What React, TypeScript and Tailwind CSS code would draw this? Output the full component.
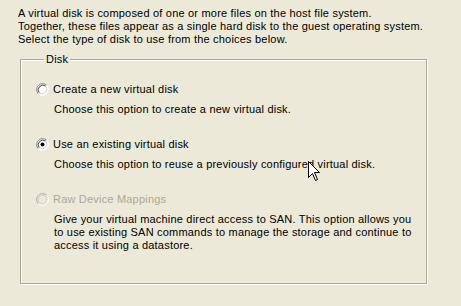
import React from 'react';

type Option = {
  label: string;
  desc: string[];
  checked?: boolean;
  disabled?: boolean;
};

const options: Option[] = [
  { label: 'Create a new virtual disk', desc: ['Choose this option to create a new virtual disk.'] },
  { label: 'Use an existing virtual disk', desc: ['Choose this option to reuse a previously configured virtual disk.'], checked: true },
  {
    label: 'Raw Device Mappings',
    desc: [
      'Give your virtual machine direct access to SAN. This option allows you',
      'to use existing SAN commands to manage the storage and continue to',
      'access it using a datastore.',
    ],
    disabled: true,
  },
];

function Radio({ checked, disabled }: { checked?: boolean; disabled?: boolean }) {
  return (
    <svg width="13" height="13" viewBox="0 0 13 13" className="shrink-0">
      <circle cx="6.5" cy="6.5" r="6" fill={disabled ? '#ece9d8' : '#ffffff'} />
      {/* outer dark arc top-left */}
      <path d="M10.74 2.26 A6 6 0 0 0 2.26 10.74" fill="none" stroke={disabled ? '#aca899' : '#808080'} strokeWidth="1" />
      <path d="M9.8 3.2 A4.7 4.7 0 0 0 3.2 9.8" fill="none" stroke={disabled ? '#d4d0c8' : '#404040'} strokeWidth="1" />
      <path d="M2.26 10.74 A6 6 0 0 0 10.74 2.26" fill="none" stroke="#ffffff" strokeWidth="1" />
      <path d="M3.2 9.8 A4.7 4.7 0 0 0 9.8 3.2" fill="none" stroke="#d4d0c8" strokeWidth="1" />
      {checked && <circle cx="6.5" cy="6.5" r="2" fill="#000000" />}
    </svg>
  );
}

export default function App() {
  return (
    <div
      className="relative w-[461px] h-[306px] bg-[#ece9d8] text-black text-[11px] leading-[13px] tracking-[0.2px] whitespace-nowrap overflow-hidden"
      style={{ fontFamily: '"Liberation Sans", Arial, sans-serif' }}
    >
      <div className="pl-[18px] pt-[7px]">
        <p>A virtual disk is composed of one or more files on the host file system.</p>
        <p>Together, these files appear as a single hard disk to the guest operating system.</p>
        <p>Select the type of disk to use from the choices below.</p>
      </div>

      <fieldset className="ml-[20px] mt-[7px] w-[398px] h-[231px] border border-[#aca899] shadow-[inset_1px_1px_0_#ffffff,1px_1px_0_#ffffff] px-[15px] pt-[17px]">
        <legend className="ml-[8px] px-[2px]">Disk</legend>
        <div className="flex flex-col gap-[22px]">
          {options.map(o => (
            <div key={o.label} className="flex flex-col gap-[7px]">
              <div className="flex items-center gap-[4px]">
                <Radio checked={o.checked} disabled={o.disabled} />
                <span className={o.disabled ? 'text-[#aca899]' : ''}>{o.label}</span>
              </div>
              <div className="pl-[18px]">
                {o.desc.map(d => (
                  <p key={d}>{d}</p>
                ))}
              </div>
            </div>
          ))}
        </div>
      </fieldset>

      {/* mouse pointer */}
      <svg className="absolute left-[308px] top-[161px]" width="13" height="21" viewBox="0 0 13 21">
        <path
          d="M0.5 0.5 L0.5 16.5 L4.5 12.5 L7.5 19.5 L9.5 18.5 L6.5 11.5 L11.5 11.5 Z"
          fill="#ffffff"
          stroke="#000000"
          strokeWidth="1"
          strokeLinejoin="miter"
        />
      </svg>
    </div>
  );
}
